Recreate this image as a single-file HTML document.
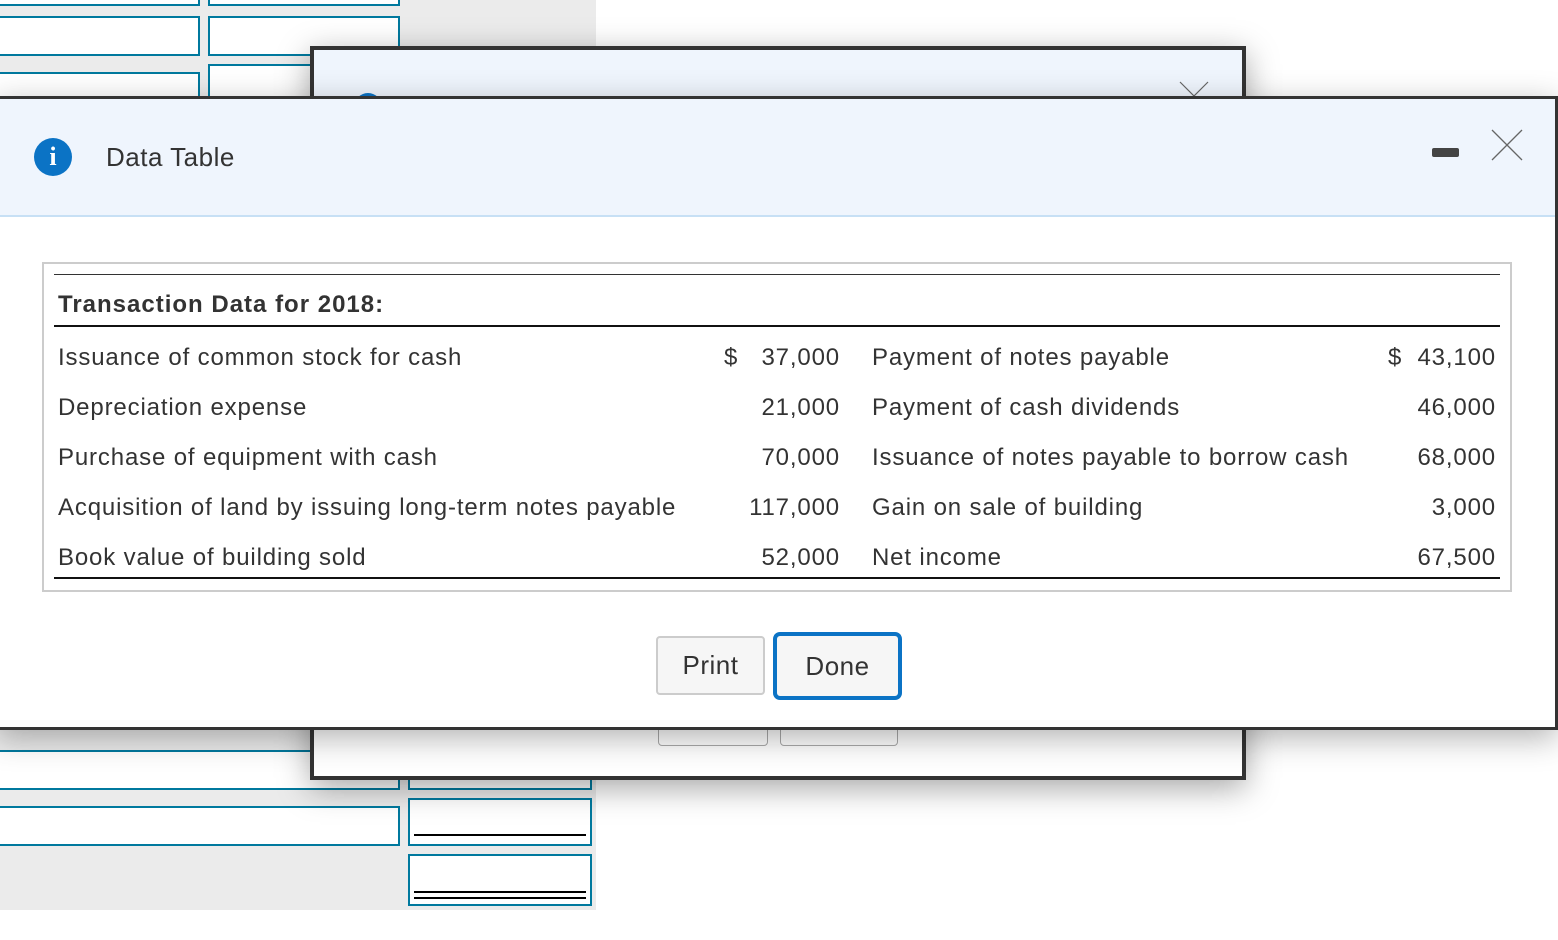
<!DOCTYPE html>
<html><head><style>
*{margin:0;padding:0;box-sizing:border-box}
body{width:1558px;height:940px;position:relative;overflow:hidden;background:#fff;font-family:"Liberation Sans",Arial,sans-serif;color:#333}
.a{position:absolute}
.in{position:absolute;border:2px solid #00799e;background:#fff}
.t{position:absolute;font-size:24px;color:#333;white-space:nowrap;line-height:28px;letter-spacing:0.85px}
.r{text-align:right}
</style></head><body>
<div class="a" style="left:0;top:0;width:596px;height:910px;background:#ebebeb"></div>
<div class="in" style="left:-2px;top:-10px;width:202px;height:16px"></div>
<div class="in" style="left:208px;top:-10px;width:192px;height:16px"></div>
<div class="in" style="left:-2px;top:16px;width:202px;height:40px"></div>
<div class="in" style="left:208px;top:16px;width:192px;height:40px"></div>
<div class="in" style="left:-2px;top:72px;width:202px;height:40px"></div>
<div class="in" style="left:208px;top:64px;width:192px;height:40px"></div>
<div class="in" style="left:-2px;top:750px;width:402px;height:40px"></div>
<div class="in" style="left:408px;top:740px;width:184px;height:50px"></div>
<div class="in" style="left:-2px;top:806px;width:402px;height:40px"></div>
<div class="in" style="left:408px;top:798px;width:184px;height:48px"><div class="a" style="left:4px;top:34px;width:172px;height:2px;background:#000"></div></div>
<div class="in" style="left:408px;top:854px;width:184px;height:52px"><div class="a" style="left:4px;top:35px;width:172px;height:2px;background:#000"></div><div class="a" style="left:4px;top:41px;width:172px;height:2px;background:#000"></div></div>

<div class="a" style="left:310px;top:46px;width:936px;height:734px;border:4px solid #333;background:#fff;box-shadow:0 8px 30px rgba(0,0,0,.35)">
<div class="a" style="left:0;top:0;width:928px;height:60px;background:#eff5fd"></div>
<div class="a" style="left:40px;top:43px;width:28px;height:28px;border-radius:50%;background:#0b73c5"></div>
<svg class="a" style="left:864px;top:30px" width="32" height="24"><path d="M2 2L30 30M30 2L2 30" stroke="#666" stroke-width="1.2"/></svg>
<div class="a" style="left:344px;top:660px;width:110px;height:36px;border:1px solid #aaa;border-radius:4px"></div>
<div class="a" style="left:466px;top:660px;width:118px;height:36px;border:1px solid #aaa;border-radius:4px"></div>
</div>

<div class="a" style="left:-4px;top:96px;width:1562px;height:634px;border:3px solid #333;background:#fff;box-shadow:0 8px 30px rgba(0,0,0,.3)">
<div class="a" style="left:0;top:0;width:1556px;height:118px;background:#eff5fd;border-bottom:2px solid #c7e0f5"></div>
<div class="a" style="left:35px;top:39px;width:38px;height:38px;border-radius:50%;background:#0b73c5;color:#fff;font:bold 26px 'Liberation Serif',serif;text-align:center;line-height:38px">i</div>
<div class="t" style="left:107px;top:43px;font-size:26px;line-height:30px;letter-spacing:0.5px">Data Table</div>
<div class="a" style="left:1433px;top:49px;width:27px;height:9px;background:#444;border-radius:2px"></div>
<svg class="a" style="left:1491px;top:29px" width="34" height="34"><path d="M2 2L32 32M32 2L2 32" stroke="#666" stroke-width="1.3"/></svg>

<div class="a" style="left:43px;top:163px;width:1470px;height:330px;border:2px solid #ccc">
<div class="a" style="left:10px;top:10px;width:1446px;height:1px;background:#333"></div>
<div class="a" style="left:10px;top:61px;width:1446px;height:2px;background:#111"></div>
<div class="a" style="left:10px;top:313px;width:1446px;height:2px;background:#111"></div>
</div>
<div class="t" style="left:59px;top:192px;font-weight:bold;letter-spacing:1px">Transaction Data for 2018:</div>

<div class="t" style="left:59px;top:245px">Issuance of common stock for cash</div>
<div class="t" style="left:59px;top:295px">Depreciation expense</div>
<div class="t" style="left:59px;top:345px">Purchase of equipment with cash</div>
<div class="t" style="left:59px;top:395px">Acquisition of land by issuing long-term notes payable</div>
<div class="t" style="left:59px;top:445px">Book value of building sold</div>

<div class="t" style="left:725px;top:245px">$</div>
<div class="t r" style="left:700px;width:141px;top:245px">37,000</div>
<div class="t r" style="left:700px;width:141px;top:295px">21,000</div>
<div class="t r" style="left:700px;width:141px;top:345px">70,000</div>
<div class="t r" style="left:700px;width:141px;top:395px">117,000</div>
<div class="t r" style="left:700px;width:141px;top:445px">52,000</div>

<div class="t" style="left:873px;top:245px">Payment of notes payable</div>
<div class="t" style="left:873px;top:295px">Payment of cash dividends</div>
<div class="t" style="left:873px;top:345px">Issuance of notes payable to borrow cash</div>
<div class="t" style="left:873px;top:395px">Gain on sale of building</div>
<div class="t" style="left:873px;top:445px">Net income</div>

<div class="t" style="left:1389px;top:245px">$</div>
<div class="t r" style="left:1360px;width:137px;top:245px">43,100</div>
<div class="t r" style="left:1360px;width:137px;top:295px">46,000</div>
<div class="t r" style="left:1360px;width:137px;top:345px">68,000</div>
<div class="t r" style="left:1360px;width:137px;top:395px">3,000</div>
<div class="t r" style="left:1360px;width:137px;top:445px">67,500</div>

<div class="a" style="left:657px;top:537px;width:109px;height:59px;border:2px solid #ccc;border-radius:4px;background:#f6f6f6;font-size:26px;text-align:center;line-height:55px;letter-spacing:0.5px">Print</div>
<div class="a" style="left:774px;top:533px;width:129px;height:68px;border:4px solid #0b73c5;border-radius:7px;background:#f6f6f6;font-size:26px;text-align:center;line-height:60px;letter-spacing:0.5px">Done</div>
</div>
</body></html>
